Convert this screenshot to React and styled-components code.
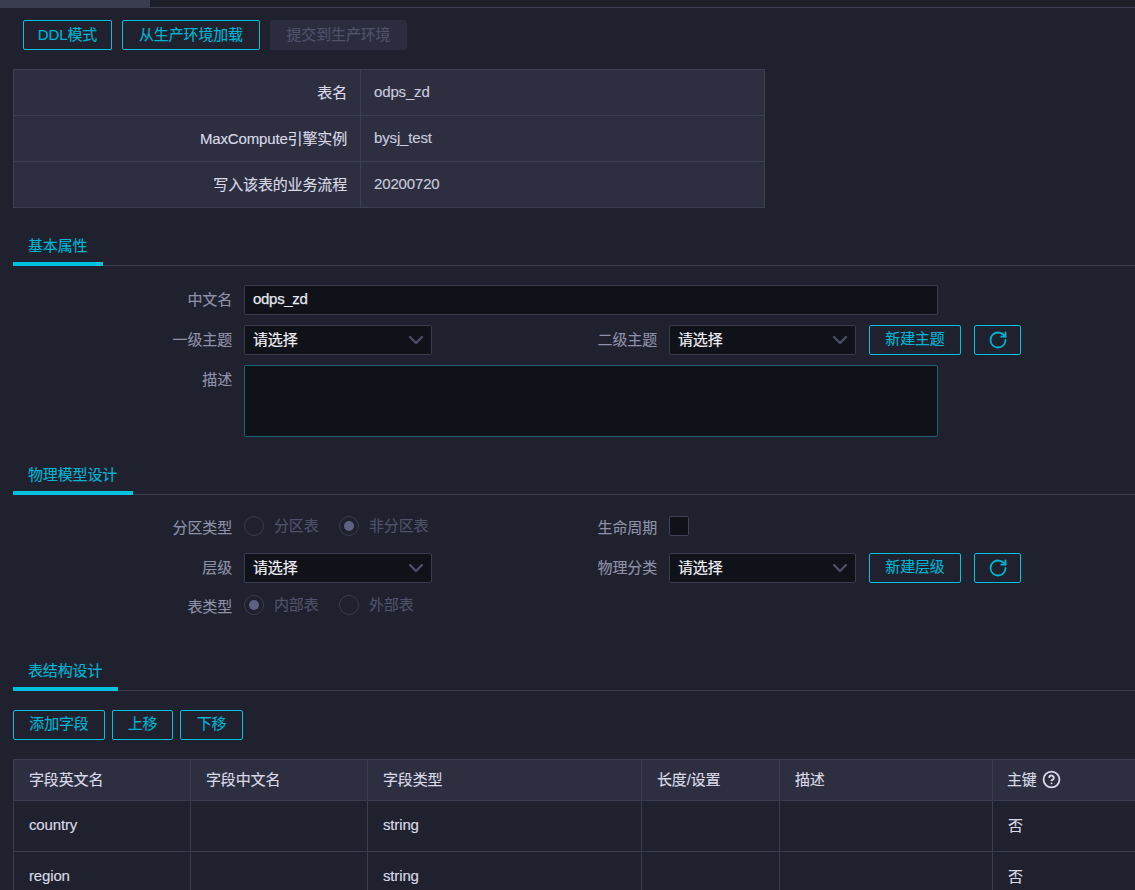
import React from "react";
import styled, { createGlobalStyle } from "styled-components";
import { ChevronDown, RotateCw, CircleHelp } from "lucide-react";

const Global = createGlobalStyle`
	html, body {
		margin: 0;
		height: 100%;
		overflow: hidden;
		background: #1f212f;
	}
	body {
		font-family: "Liberation Sans", "Noto Sans CJK SC", sans-serif;
		font-size: 15px;
		letter-spacing: -0.15px;
		-webkit-text-stroke: 0.15px;
		color: #c9cbdc;
	}
	* {
		box-sizing: border-box;
	}
`;

const Page = styled.div`
	width: 1135px;
	height: 890px;
	overflow: hidden;
`;

const TopTabs = styled.div`
	height: 8px;
	background: #1c1e2a;
	border-bottom: 1px solid #3a3c50;
`;

const ActiveTab = styled.div`
	width: 150px;
	height: 7px;
	background: #3a3c50;
`;

const FieldToolbar = styled.div`
	display: flex;
	gap: 7px;
	padding: 19px 0 0 13px;
`;

const Button = styled.button`
	height: 30px;
	width: ${(props) => props.$width}px;
	padding: 0 0 5px;
	background: transparent;
	border: 1px solid #00c1de;
	border-radius: 2px;
	color: #00b4cf;
	font: inherit;
	letter-spacing: inherit;
	display: flex;
	align-items: center;
	justify-content: center;
	cursor: pointer;
	&:disabled {
		background: #2b2d3e;
		border-color: #2b2d3e;
		color: #50526a;
	}
`;

const Toolbar = styled.div`
	display: flex;
	gap: 10px;
	padding: 12px 0 0 23px;
	${Button} {
		padding-bottom: 3px;
	}
`;

const IconButton = styled(Button)`
	padding: 0;
`;

const InfoTable = styled.table`
	width: 752px;
	margin: 19px 0 0 13px;
	border-collapse: collapse;
	table-layout: fixed;
	background: #2d2f41;
	td {
		border: 1px solid #3c3e52;
		height: 46px;
		padding: 0 13px 2px;
	}
	td:first-child {
		width: 347px;
		text-align: right;
		color: #d9dae6;
	}
`;

const SectionTabs = styled.div`
	display: flex;
	margin-top: ${(props) => props.$top}px;
	margin-left: 13px;
	border-bottom: 1px solid #3a3c50;
`;

const SectionTab = styled.div`
	width: ${(props) => props.$width}px;
	height: 31px;
	margin-bottom: -1px;
	padding: 0 0 0 15px;
	line-height: 22px;
	color: #00b4cf;
	border-bottom: 4px solid #00c1de;
`;

const Row = styled.div`
	display: flex;
	align-items: ${(props) => props.$align || "center"};
	margin-top: ${(props) => props.$top ?? 10}px;
	height: ${(props) => props.$height || 30}px;
`;

const Label = styled.label`
	width: ${(props) => props.$width}px;
	margin-right: 12px;
	margin-bottom: ${(props) => props.$lift ?? 3}px;
	flex: none;
	text-align: right;
	color: #8f91a8;
	padding-top: ${(props) => props.$top || 0}px;
`;

const TextInput = styled.div`
	width: 694px;
	height: 30px;
	padding: 0 8px;
	line-height: 26px;
	background: #10121a;
	border: 1px solid #3a3c50;
	border-radius: 2px;
	color: #e6e7ef;
	-webkit-text-stroke: 0.25px;
	letter-spacing: -0.3px;
`;

const TextArea = styled.div`
	width: 694px;
	height: 72px;
	background: #10121a;
	border: 1px solid #1f5f72;
	border-radius: 2px;
`;

const SelectBox = styled.div`
	width: ${(props) => props.$width}px;
	height: 30px;
	flex: none;
	display: flex;
	align-items: center;
	justify-content: space-between;
	padding: 0 8px 4px;
	background: #10121a;
	border: 1px solid #3a3c50;
	border-radius: 2px;
	color: #f0f0f5;
	-webkit-text-stroke: 0.2px;
	svg {
		margin: 4px -5px 0 0;
	}
`;

const RadioGroup = styled.div`
	display: flex;
	align-items: center;
	width: 188px;
	flex: none;
`;

const RadioItem = styled.div`
	display: flex;
	align-items: center;
	gap: 10px;
	width: ${(props) => props.$width}px;
	flex: none;
	color: #50526a;
`;

const RadioText = styled.span`
	margin-bottom: 4px;
`;

const RadioDot = styled.span`
	width: 20px;
	height: 20px;
	border-radius: 50%;
	border: 1px solid #3a3c50;
	display: flex;
	align-items: center;
	justify-content: center;
	flex: none;
	&::after {
		content: "";
		width: 10px;
		height: 10px;
		border-radius: 50%;
		background: ${(props) => (props.$checked ? "#5f6180" : "transparent")};
	}
`;

const CheckBox = styled.span`
	width: 20px;
	height: 20px;
	background: #10121a;
	border: 1px solid #3f4158;
	border-radius: 2px;
`;

const Spacer = styled.div`
	width: ${(props) => props.$width}px;
	flex: none;
`;

const FieldTable = styled.table`
	width: 1122px;
	margin: 19px 0 0 13px;
	border-collapse: collapse;
	table-layout: fixed;
	th {
		height: 41px;
		padding: 0 15px 4px;
		text-align: left;
		font-weight: 400;
		background: #2d2f41;
		color: #d9dae6;
		border: 1px solid #3a3c50;
	}
	td {
		height: 50.5px;
		padding: 0 15px 2px;
		color: #d9dae6;
		border: 1px solid #3a3c50;
	}
`;

const HeadHelp = styled.span`
	display: inline-flex;
	align-items: center;
	gap: 5px;
	margin-left: -1px;
	svg {
		display: block;
		margin-top: 2px;
	}
`;

const info = [
	["表名", "odps_zd"],
	["MaxCompute引擎实例", "bysj_test"],
	["写入该表的业务流程", "20200720"],
];

const fields = [
	["country", "", "string", "", "", "否"],
	["region", "", "string", "", "", "否"],
];

const colWidths = [177, 177, 274, 138, 213, 143];

function Select({ width }) {
	return (
		<SelectBox $width={width}>
			请选择
			<ChevronDown size={24} strokeWidth={2.2} color="#4e5068" />
		</SelectBox>
	);
}

function Refresh() {
	return (
		<IconButton $width={47}>
			<RotateCw size={20} strokeWidth={2.2} />
		</IconButton>
	);
}

function Radio({ width, checked, children }) {
	return (
		<RadioItem $width={width}>
			<RadioDot $checked={checked} />
			<RadioText>{children}</RadioText>
		</RadioItem>
	);
}

export default function App() {
	return (
		<Page>
			<Global />
			<TopTabs>
				<ActiveTab />
			</TopTabs>
			<Toolbar>
				<Button $width={89}>DDL模式</Button>
				<Button $width={138}>从生产环境加载</Button>
				<Button $width={137} disabled>
					提交到生产环境
				</Button>
			</Toolbar>
			<InfoTable>
				<tbody>
					{info.map((row) => (
						<tr key={row[0]}>
							<td>{row[0]}</td>
							<td>{row[1]}</td>
						</tr>
					))}
				</tbody>
			</InfoTable>

			<SectionTabs $top={27}>
				<SectionTab $width={90}>基本属性</SectionTab>
			</SectionTabs>
			<Row $top={19}>
				<Label $width={232}>中文名</Label>
				<TextInput>odps_zd</TextInput>
			</Row>
			<Row>
				<Label $width={232}>一级主题</Label>
				<Select width={188} />
				<Label $width={225}>二级主题</Label>
				<Select width={187} />
				<Spacer $width={13} />
				<Button $width={92}>新建主题</Button>
				<Spacer $width={13} />
				<Refresh />
			</Row>
			<Row $align="flex-start" $height={72}>
				<Label $width={232} $top={3} $lift={0}>
					描述
				</Label>
				<TextArea />
			</Row>

			<SectionTabs $top={27}>
				<SectionTab $width={120}>物理模型设计</SectionTab>
			</SectionTabs>
			<Row $top={16} $height={30}>
				<Label $width={232} $lift={0}>
					分区类型
				</Label>
				<RadioGroup>
					<Radio width={95}>分区表</Radio>
					<Radio width={93} checked>
						非分区表
					</Radio>
				</RadioGroup>
				<Label $width={225} $lift={0}>
					生命周期
				</Label>
				<CheckBox />
			</Row>
			<Row $top={12}>
				<Label $width={232}>层级</Label>
				<Select width={188} />
				<Label $width={225}>物理分类</Label>
				<Select width={187} />
				<Spacer $width={13} />
				<Button $width={92}>新建层级</Button>
				<Spacer $width={13} />
				<Refresh />
			</Row>
			<Row $top={7}>
				<Label $width={232} $lift={0}>
					表类型
				</Label>
				<RadioGroup>
					<Radio width={95} checked>
						内部表
					</Radio>
					<Radio width={93}>外部表</Radio>
				</RadioGroup>
			</Row>

			<SectionTabs $top={40}>
				<SectionTab $width={105}>表结构设计</SectionTab>
			</SectionTabs>
			<FieldToolbar>
				<Button $width={92}>添加字段</Button>
				<Button $width={61}>上移</Button>
				<Button $width={63}>下移</Button>
			</FieldToolbar>
			<FieldTable>
				<colgroup>
					{colWidths.map((w, i) => (
						<col key={i} style={{ width: w }} />
					))}
				</colgroup>
				<thead>
					<tr>
						<th>字段英文名</th>
						<th>字段中文名</th>
						<th>字段类型</th>
						<th>长度/设置</th>
						<th>描述</th>
						<th>
							<HeadHelp>
								主键
								<CircleHelp size={19} strokeWidth={2.3} />
							</HeadHelp>
						</th>
					</tr>
				</thead>
				<tbody>
					{fields.map((row) => (
						<tr key={row[0]}>
							{row.map((cell, i) => (
								<td key={i}>{cell}</td>
							))}
						</tr>
					))}
				</tbody>
			</FieldTable>
		</Page>
	);
}
